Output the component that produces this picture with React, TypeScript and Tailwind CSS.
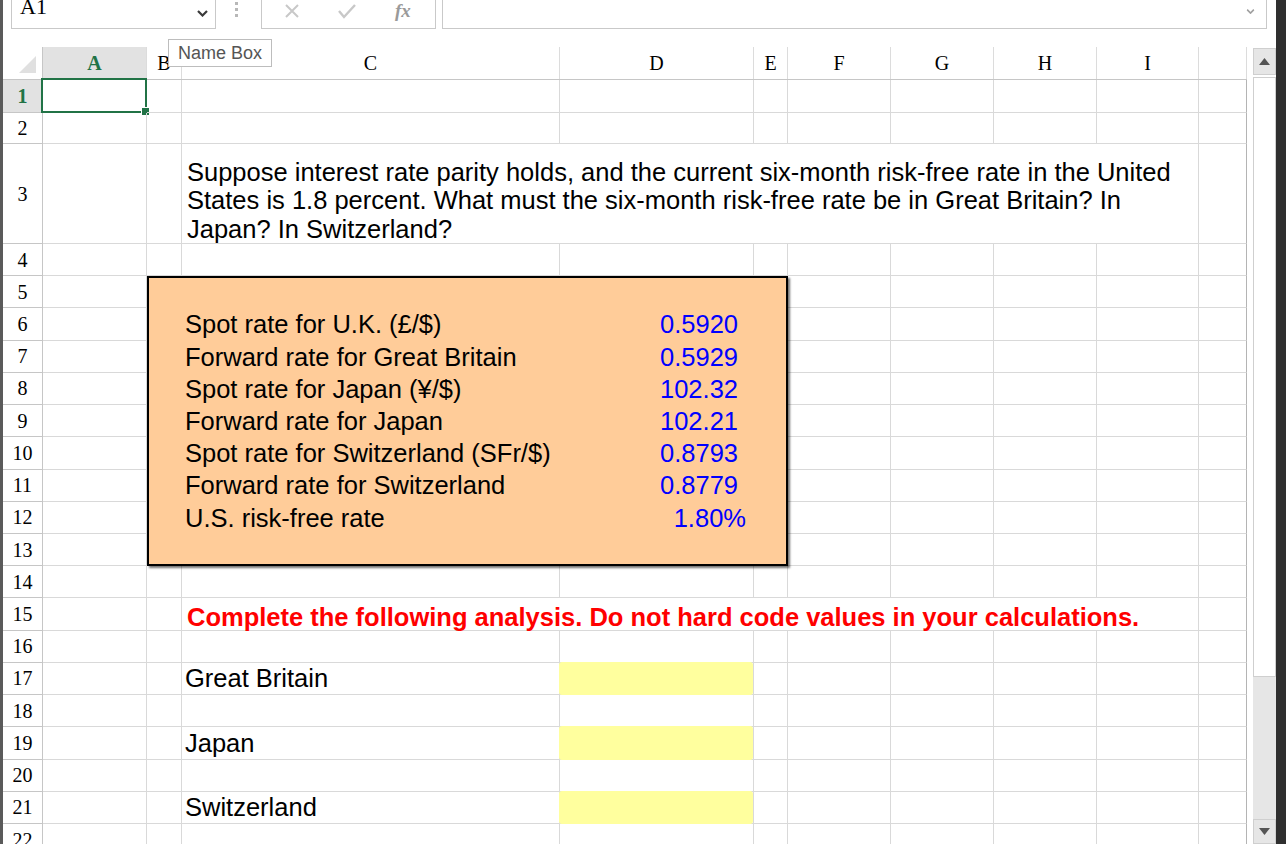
import React from 'react';

type Col = 'A' | 'B' | 'C' | 'D' | 'E' | 'F' | 'G' | 'H' | 'I' | 'J';

const COLS: Col[] = ['A', 'B', 'C', 'D', 'E', 'F', 'G', 'H', 'I', 'J'];

const WIDTH: Record<Col, string> = {
  A: 'w-[104px]',
  B: 'w-[35px]',
  C: 'w-[378px]',
  D: 'w-[194px]',
  E: 'w-[34px]',
  F: 'w-[103px]',
  G: 'w-[103px]',
  H: 'w-[103px]',
  I: 'w-[102px]',
  J: 'w-[48px]',
};

const ROW_H = 'h-[32.22px]';

const inputs = [
  { label: 'Spot rate for U.K. (£/$)', value: '0.5920' },
  { label: 'Forward rate for Great Britain', value: '0.5929' },
  { label: 'Spot rate for Japan (¥/$)', value: '102.32' },
  { label: 'Forward rate for Japan', value: '102.21' },
  { label: 'Spot rate for Switzerland (SFr/$)', value: '0.8793' },
  { label: 'Forward rate for Switzerland', value: '0.8779' },
  { label: 'U.S. risk-free rate', value: '1.80%', percent: true },
];

const Cell: React.FC<{ col: Col; className?: string; children?: React.ReactNode }> = ({
  col,
  className = '',
  children,
}) => (
  <div
    className={`${WIDTH[col]} shrink-0 h-full border-b border-r ${
      col === 'J' ? 'border-r-[#b4b4b4]' : ''
    } border-[#d9d9d9] ${className}`}
  >
    {children}
  </div>
);

const RowHeader: React.FC<{ n: number; active?: boolean }> = ({ n, active }) => (
  <div
    className={`w-[40px] shrink-0 h-full flex items-center justify-center border-r border-b border-[#c6c6c6] font-['Liberation_Serif',serif] text-[20px] ${
      active ? 'bg-[#e2e2e2] text-[#217346] font-bold' : 'text-black'
    }`}
  >
    {n}
  </div>
);

const PlainRow: React.FC<{ n: number; h?: string; cells?: Partial<Record<Col, React.ReactNode>> }> = ({
  n,
  h = ROW_H,
  cells = {},
}) => (
  <div className={`flex shrink-0 ${h}`}>
    <RowHeader n={n} />
    {COLS.map((c) => (
      <Cell key={c} col={c} className="relative">
        {cells[c]}
      </Cell>
    ))}
  </div>
);

const Chevron = ({ className = '' }: { className?: string }) => (
  <svg width="11" height="7" viewBox="0 0 11 7" className={className}>
    <path d="M1 1l4.5 4.5L10 1" fill="none" stroke="currentColor" strokeWidth="2.2" />
  </svg>
);

const Yellow = () => (
  <div className="absolute -left-px -top-px right-0 -bottom-px bg-[#ffff9e] rounded-[3px]" />
);

export default function App() {
  const sans = "font-['Liberation_Sans',Arial,sans-serif]";

  return (
    <div className="relative flex w-[1286px] h-[844px] overflow-hidden bg-white">
      <div className="w-[3px] shrink-0 bg-[#5a5a5a]" />

      <div className="flex flex-col w-[1273px] shrink-0">
        {/* Formula bar */}
        <div className="flex items-start h-[47px] shrink-0">
          <div className="ml-[8px] -mt-px w-[205px] h-[30px] border border-[#c9c9c9] flex items-start justify-between pl-[8px] pr-[7px] overflow-hidden">
            <span className="font-['Liberation_Serif',serif] text-[22px] leading-[22px] -mt-[4px] text-black">A1</span>
            <Chevron className="mt-[10px] text-[#3a3a3a]" />
          </div>
          <div className="ml-[19px] mt-[2px] flex flex-col gap-[3px]">
            <div className="w-[3px] h-[3px] bg-[#b8b8b8]" />
            <div className="w-[3px] h-[3px] bg-[#b8b8b8]" />
            <div className="w-[3px] h-[3px] bg-[#b8b8b8]" />
          </div>
          <div className="ml-[23px] -mt-px w-[175px] h-[30px] border border-[#c9c9c9] relative">
            <svg width="16" height="16" viewBox="0 0 16 16" className="absolute left-[22px] top-[3px]">
              <path d="M2 2l12 12M14 2L2 14" stroke="#c8c8c8" strokeWidth="2" />
            </svg>
            <svg width="20" height="16" viewBox="0 0 20 16" className="absolute left-[75px] top-[3px]">
              <path d="M2 8l5 6L18 2" fill="none" stroke="#c8c8c8" strokeWidth="2.4" />
            </svg>
            <span className="absolute left-[133px] top-[-3px] font-['Liberation_Serif',serif] italic font-bold text-[19px] text-[#9a9a9a]">
              fx
            </span>
          </div>
          <div className="ml-[6px] -mt-px w-[825px] h-[30px] border border-[#c9c9c9] flex items-start justify-end pr-[10px]">
            <Chevron className="mt-[8px] text-[#a0a0a0] scale-75" />
          </div>
        </div>

        <div className="flex flex-1 min-h-0">
          {/* Sheet */}
          <div className="flex flex-col w-[1244px] shrink-0">
            {/* Column headers */}
            <div className="flex h-[33px] shrink-0 border-b border-[#c6c6c6]">
              <div className="w-[40px] shrink-0 h-full border-r border-[#c6c6c6] relative">
                <svg width="17" height="17" viewBox="0 0 17 17" className="absolute left-[16px] top-[9px]">
                  <polygon points="17,0 17,17 0,17" fill="#e0e0e0" />
                </svg>
              </div>
              {COLS.map((c) => (
                <div
                  key={c}
                  className={`${WIDTH[c]} shrink-0 h-full border-r border-[#dcdcdc] flex items-center justify-center font-['Liberation_Serif',serif] text-[20px] ${
                    c === 'A' ? 'bg-[#e2e2e2] text-[#217346] font-bold' : 'text-black'
                  }`}
                >
                  {c === 'J' ? '' : c}
                </div>
              ))}
            </div>

            {/* Row 1 */}
            <div className="flex shrink-0 h-[33px]">
              <RowHeader n={1} active />
              {COLS.map((c) => (
                <Cell key={c} col={c} className="relative">
                  {c === 'A' && (
                    <>
                      <div className="absolute -left-[2px] -top-[2px] -right-px -bottom-px border-2 border-[#217346]" />
                      <div className="absolute -right-[4px] -bottom-[4px] w-[7px] h-[7px] bg-[#217346] border border-white box-content" />
                    </>
                  )}
                </Cell>
              ))}
            </div>

            <PlainRow n={2} h="h-[31px]" />

            {/* Row 3: merged question text */}
            <div className="flex shrink-0 h-[100px]">
              <RowHeader n={3} />
              <Cell col="A" />
              <Cell col="B" />
              <div
                className={`w-[1017px] shrink-0 h-full border-r border-b border-[#d9d9d9] flex items-end pl-[5px] ${sans} text-[25.5px] leading-[28.5px] text-black whitespace-nowrap`}
              >
                <p>
                  Suppose interest rate parity holds, and the current six-month risk-free rate in the United
                  <br />
                  States is 1.8 percent. What must the six-month risk-free rate be in Great Britain? In
                  <br />
                  Japan? In Switzerland?
                </p>
              </div>
              <Cell col="J" />
            </div>

            <PlainRow n={4} />

            {/* Rows 5-13: input box */}
            <div className="flex shrink-0 h-[290px]">
              <div className="flex flex-col">
                {[5, 6, 7, 8, 9, 10, 11, 12, 13].map((n) => (
                  <div key={n} className={`flex ${ROW_H}`}>
                    <RowHeader n={n} />
                    <Cell col="A" />
                  </div>
                ))}
              </div>
              <div
                className={`w-[641px] shrink-0 h-full relative z-10 border-2 border-black bg-[#ffcc99] shadow-[2px_2px_2px_rgba(0,0,0,0.55)] pt-[30.2px] ${sans} text-[25.5px]`}
              >
                {inputs.map((row) => (
                  <div key={row.label} className={`flex items-center ${ROW_H}`}>
                    <div className="w-[33px] shrink-0" />
                    <div className="w-[378px] shrink-0 pl-[3px] text-black whitespace-nowrap">{row.label}</div>
                    <div
                      className={`w-[194px] shrink-0 text-right text-[#0000ff] ${row.percent ? 'pr-[8px]' : 'pr-[16px]'}`}
                    >
                      {row.value}
                    </div>
                  </div>
                ))}
              </div>
              <div className="flex flex-col">
                {[5, 6, 7, 8, 9, 10, 11, 12, 13].map((n) => (
                  <div key={n} className={`flex ${ROW_H}`}>
                    {(['F', 'G', 'H', 'I', 'J'] as Col[]).map((c) => (
                      <Cell key={c} col={c} />
                    ))}
                  </div>
                ))}
              </div>
            </div>

            <PlainRow n={14} />

            {/* Row 15: instruction */}
            <div className={`flex shrink-0 ${ROW_H}`}>
              <RowHeader n={15} />
              <Cell col="A" />
              <Cell col="B" />
              <div
                className={`w-[1017px] shrink-0 h-full border-r border-b border-[#d9d9d9] flex items-end pl-[5px] ${sans} text-[25.5px] leading-[25px] font-bold text-[#ff0000] whitespace-nowrap`}
              >
                Complete the following analysis. Do not hard code values in your calculations.
              </div>
              <Cell col="J" />
            </div>

            <PlainRow n={16} />
            {[
              { n: 17, label: 'Great Britain' },
              { n: 19, label: 'Japan' },
              { n: 21, label: 'Switzerland' },
            ].map((r) => (
              <React.Fragment key={r.n}>
                <PlainRow
                  n={r.n}
                  cells={{
                    C: (
                      <div className={`h-full flex items-center pl-[3px] ${sans} text-[25.5px] text-black whitespace-nowrap`}>
                        {r.label}
                      </div>
                    ),
                    D: <Yellow />,
                  }}
                />
                <PlainRow n={r.n + 1} />
              </React.Fragment>
            ))}
          </div>

          {/* Vertical scrollbar */}
          <div className="w-[29px] shrink-0 flex flex-col pl-[6px]">
            <div className="h-[27px] shrink-0 mt-px bg-[#e6e6e6] border border-[#cfcfcf] flex items-center justify-center">
              <svg width="11" height="7" viewBox="0 0 11 7">
                <polygon points="5.5,0 11,7 0,7" fill="#555" />
              </svg>
            </div>
            <div className="h-[600px] shrink-0 mt-[2px] bg-white border border-[#cfcfcf]" />
            <div className="flex-1 bg-[#e6e6e6]" />
            <div className="h-[25px] shrink-0 bg-[#e6e6e6] border border-[#cfcfcf] flex items-center justify-center">
              <svg width="11" height="7" viewBox="0 0 11 7">
                <polygon points="0,0 11,0 5.5,7" fill="#555" />
              </svg>
            </div>
          </div>
        </div>
      </div>

      <div className="w-[10px] shrink-0 bg-[#2f2f2f]" />

      {/* Name Box tooltip */}
      <div
        className={`absolute left-[168px] top-[39px] w-[104px] h-[28px] z-20 bg-white border border-[#bdbdbd] flex items-center justify-center ${sans} text-[18px] text-[#555]`}
      >
        Name Box
      </div>
    </div>
  );
}
